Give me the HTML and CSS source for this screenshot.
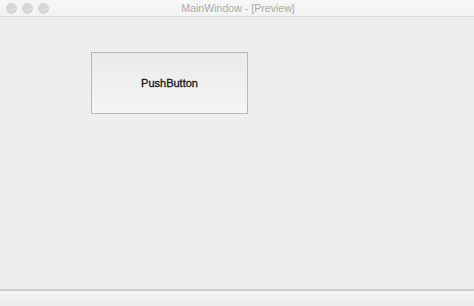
FILE: index.html
```html
<!DOCTYPE html>
<html>
  <head>
    <title>MainWindow - [Preview]</title>
    <link rel="stylesheet" href="styles.css">
  </head>
  <body>
    <div class="window">
      <div class="titlebar">
        <div class="lights">
          <span class="light"></span>
          <span class="light"></span>
          <span class="light"></span>
        </div>
        <div class="title">MainWindow - [Preview]</div>
      </div>

      <div class="central">
        <button class="push-button" type="button">PushButton</button>
      </div>

      <div class="statusbar"></div>
    </div>
  </body>
</html>
```

FILE: styles.css
```css
html,
body {
  margin: 0;
  height: 100%;
}

body {
  font-family: "Liberation Sans", Arial, sans-serif;
  background: #eeeeee;
}

.window {
  display: flex;
  flex-direction: column;
  height: 100vh;
}

/* Title bar with the three grey window buttons */
.titlebar {
  position: relative;
  height: 16px;
  display: flex;
  align-items: center;
  justify-content: center;
  background: linear-gradient(#f7f7f7, #f2f2f2);
  border-bottom: 1px solid #dcdcdc;
}

.lights {
  position: absolute;
  left: 6px;
  top: 3px;
  display: flex;
  gap: 5px;
}

.light {
  width: 11px;
  height: 11px;
  border-radius: 50%;
  background: #d8d8d8;
  box-sizing: border-box;
  border: 1px solid #d0d0d0;
}

.title {
  font-size: 10.6px;
  color: #ababab;
  padding-left: 2px;
}

.central {
  flex: 1;
  padding: 35px 0 0 91px;
}

.push-button {
  width: 157px;
  height: 62px;
  margin: 0;
  padding: 0 0 1px;
  border: 1px solid #b8b8b8;
  background: linear-gradient(#eaeaea, #f5f5f5);
  font-family: "Liberation Sans", Arial, sans-serif;
  font-size: 11px;
  color: #111111;
  -webkit-text-stroke: 0.3px #111111;
}

.statusbar {
  height: 15px;
  border-top: 2px solid #cdcdcd;
  background: linear-gradient(#f4f4f4, #ececec);
}
```
